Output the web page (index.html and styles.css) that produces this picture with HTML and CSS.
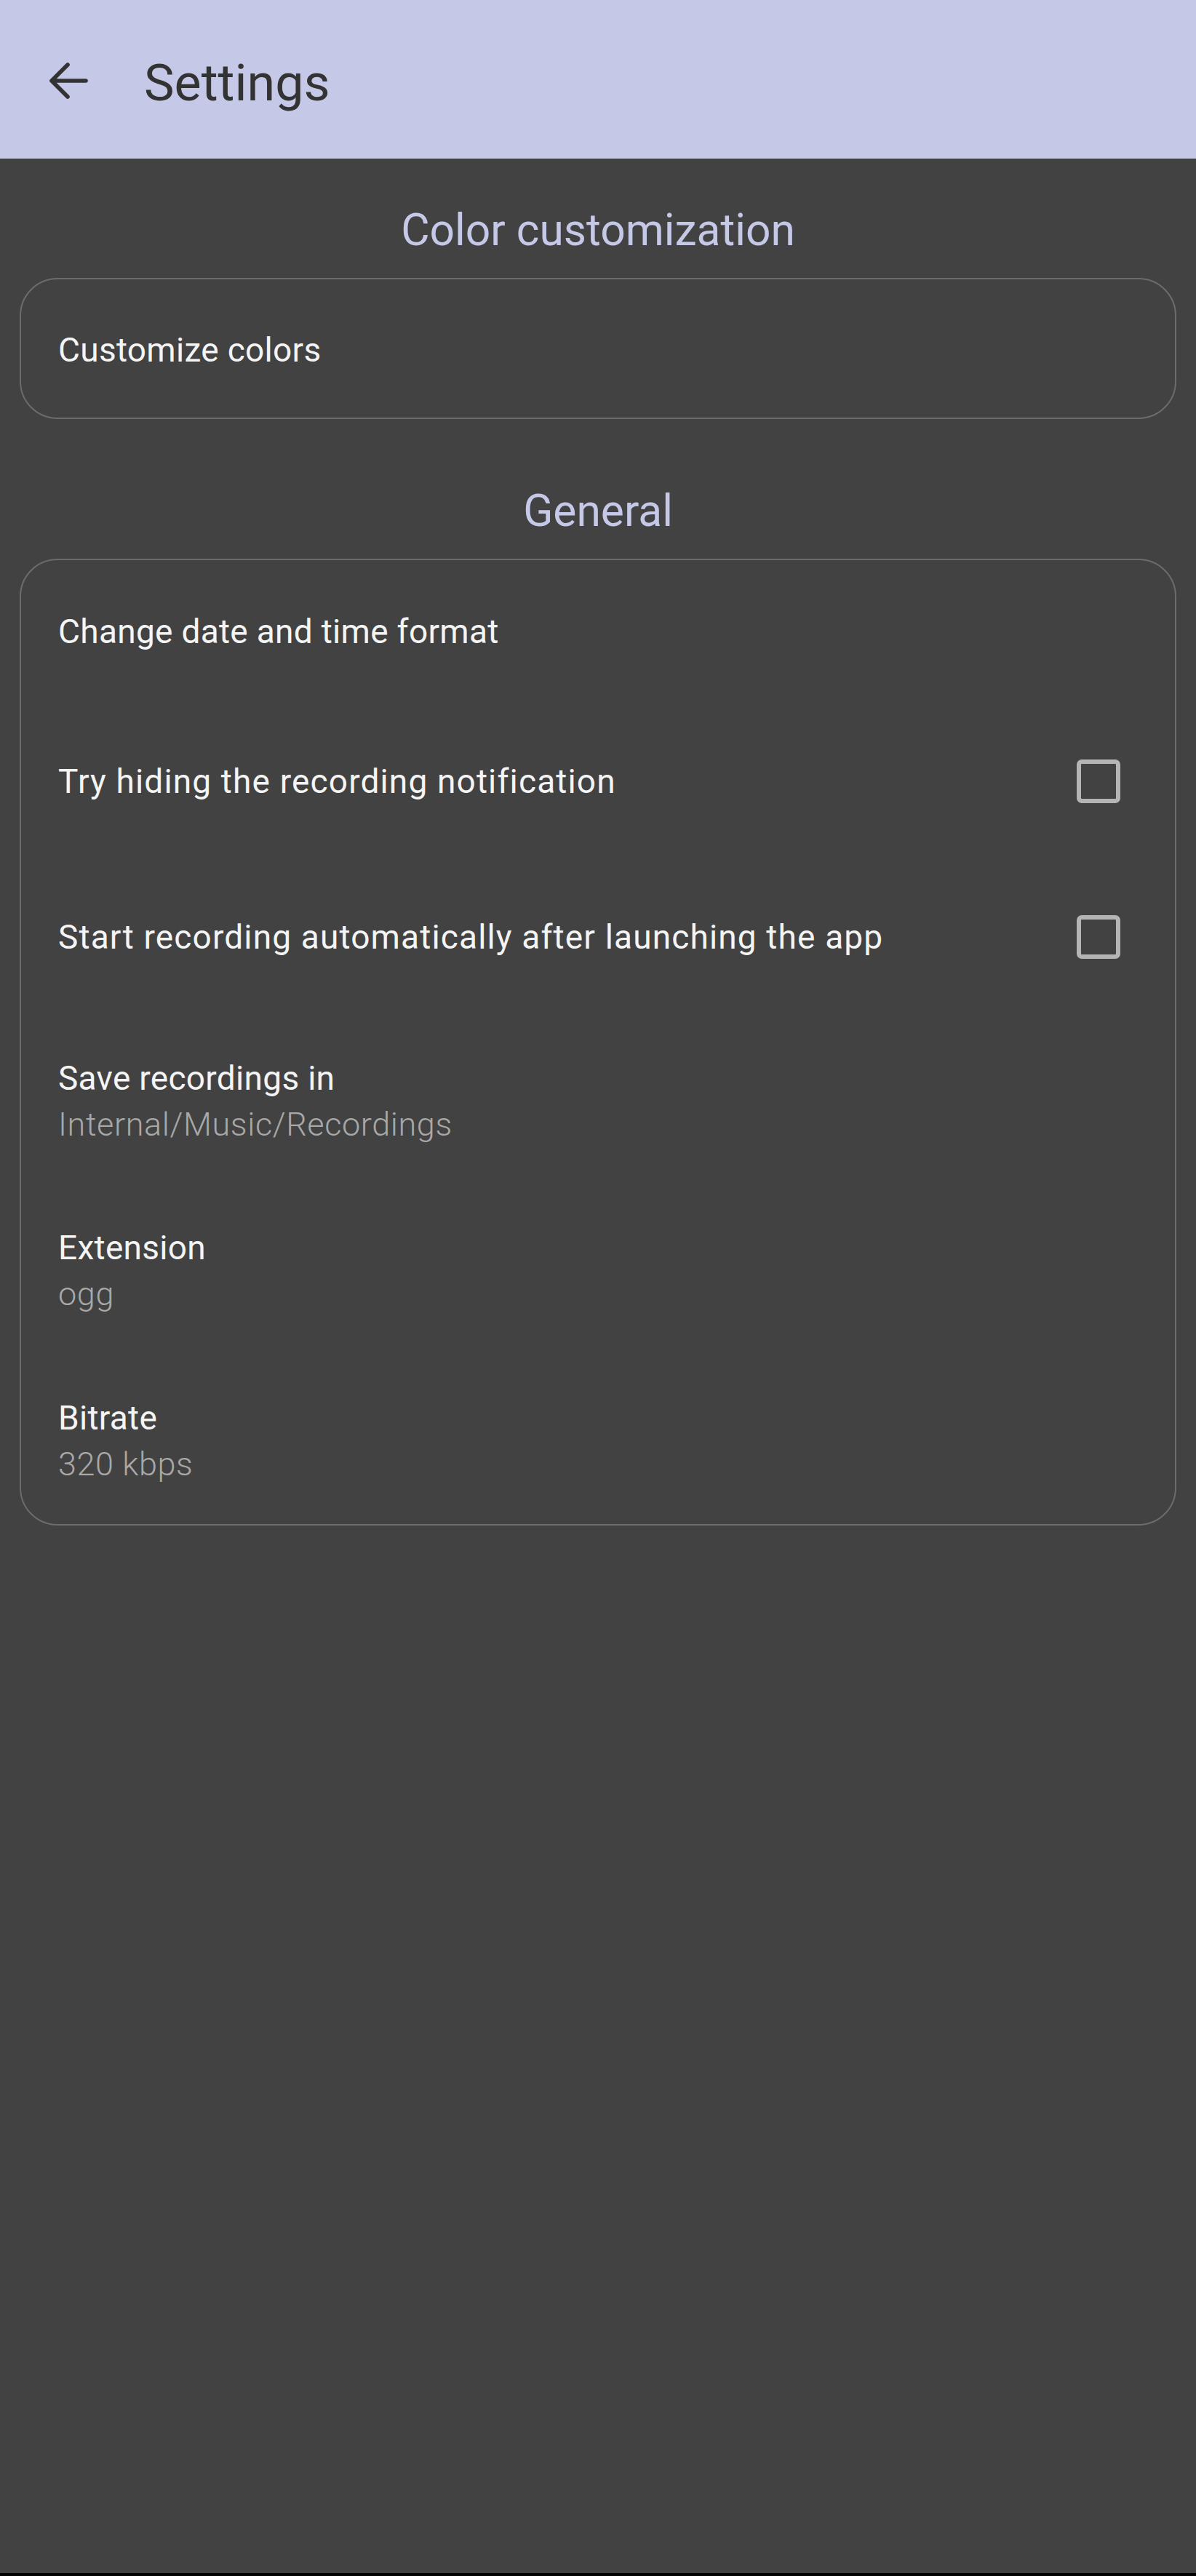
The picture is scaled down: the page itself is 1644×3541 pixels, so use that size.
FILE: index.html
```html
<!DOCTYPE html>
<html lang="en">
<head>
<meta charset="utf-8">
<title>Settings</title>
<link rel="stylesheet" href="styles.css">
</head>
<body>
<div class="app">
  <header class="topbar">
    <button class="back" aria-label="Back">
      <svg class="back-icon" width="60" height="62" viewBox="0 0 60 62" aria-hidden="true">
        <path d="M7 28 H54 M7 28 L29 6 M7 28 L29 50" fill="none" stroke="#333333" stroke-width="5.6" stroke-linecap="round" stroke-linejoin="round"/>
      </svg>
    </button>
    <h1 class="title">Settings</h1>
  </header>

  <main class="content">
    <section class="group">
      <h2 class="group-title">Color customization</h2>
      <div class="card">
        <div class="row row-first">
          <span class="label">Customize colors</span>
        </div>
      </div>
    </section>

    <section class="group">
      <h2 class="group-title">General</h2>
      <div class="card">
        <div class="row row-plain">
          <span class="label">Change date and time format</span>
        </div>
        <div class="row row-check">
          <span class="label label-check">Try hiding the recording notification</span>
          <span class="checkbox" role="checkbox" aria-checked="false"></span>
        </div>
        <div class="row row-check">
          <span class="label label-check">Start recording automatically after launching the app</span>
          <span class="checkbox" role="checkbox" aria-checked="false"></span>
        </div>
        <div class="row row-two">
          <span class="label">Save recordings in</span>
          <span class="value">Internal/Music/Recordings</span>
        </div>
        <div class="row row-two">
          <span class="label">Extension</span>
          <span class="value">ogg</span>
        </div>
        <div class="row row-two">
          <span class="label">Bitrate</span>
          <span class="value">320 kbps</span>
        </div>
      </div>
    </section>
  </main>

  <div class="bottom-edge"></div>
</div>
</body>
</html>
```

FILE: styles.css
```css
html, body {
  margin: 0;
  padding: 0;
  background: #424242;
}

body {
  font-family: Roboto, "Noto Sans", "Liberation Sans", sans-serif;
}

.app {
  display: flex;
  flex-direction: column;
  min-height: 3541px;
}

.topbar {
  box-sizing: border-box;
  height: 218px;
  padding: 10px 0 0 64px;
  background: #c5c9e7;
  display: flex;
  align-items: center;
  gap: 74px;
}

.back {
  border: 0;
  padding: 0;
  margin: 0;
  background: transparent;
  display: flex;
  width: 60px;
  height: 62px;
}

.back-icon {
  display: block;
}

.title {
  margin: 0;
  font-size: 70px;
  line-height: 82px;
  font-weight: 400;
  color: #333333;
}

.content {
  flex: 1;
  padding: 64px 27px 0;
}

.group {
  margin-bottom: 92px;
}

.group-title {
  margin: 0 0 30px;
  text-align: center;
  font-size: 60.5px;
  line-height: 70px;
  font-weight: 400;
  color: #c5c9e7;
}

.card {
  border: 2.5px solid #6c6c6c;
  border-radius: 52px;
}

.row {
  display: flex;
  padding: 71px 50px 71px 51px;
}

.row-first {
  padding-top: 70px;
  padding-bottom: 66px;
}

.row-plain {
  padding-bottom: 71.5px;
}

.row-check {
  align-items: center;
  justify-content: space-between;
}

.row-two {
  flex-direction: column;
  padding-top: 60px;
  padding-bottom: 55.5px;
  gap: 10px;
}

.label {
  font-size: 46px;
  line-height: 54px;
  color: #f4f4f4;
  letter-spacing: 0.3px;
}

.label-check {
  letter-spacing: 1.15px;
}

.value {
  font-size: 45px;
  line-height: 54px;
  font-weight: 300;
  color: #a8a8a8;
  letter-spacing: 0.6px;
}

.checkbox {
  box-sizing: border-box;
  flex: none;
  width: 60px;
  height: 60px;
  margin: 6px 25.5px 6px 0;
  border: 6.5px solid #b5b5b5;
  border-radius: 7px;
}

.bottom-edge {
  height: 4px;
  background: #000000;
}
```
